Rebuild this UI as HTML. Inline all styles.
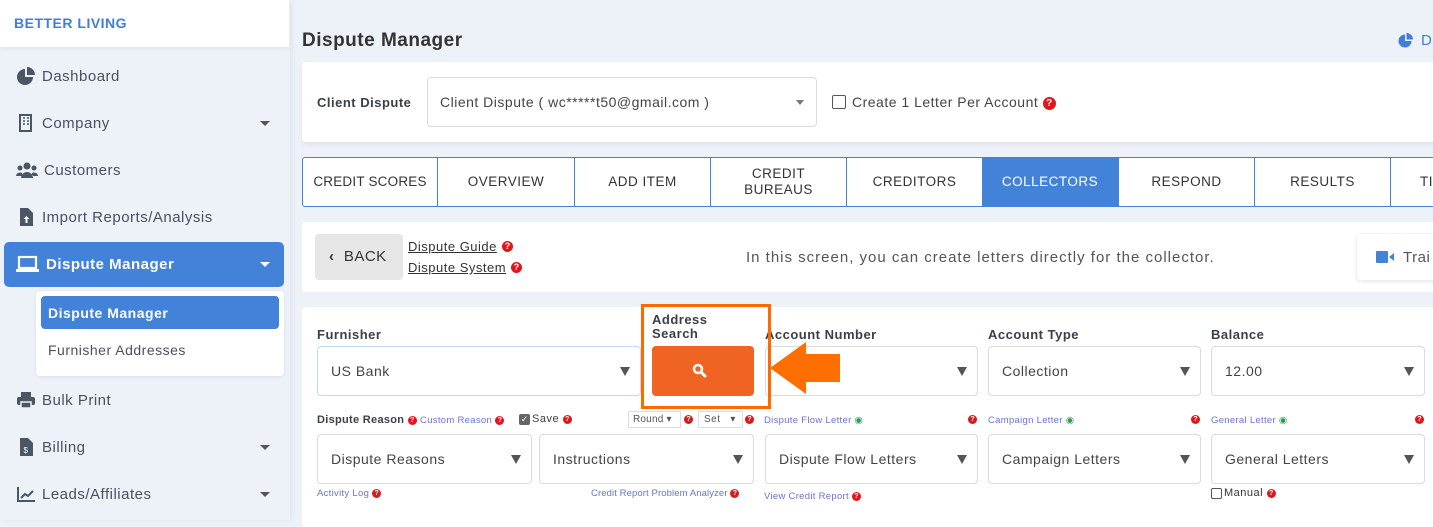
<!DOCTYPE html>
<html><head><meta charset="utf-8"><style>
*{box-sizing:border-box;margin:0;padding:0}
body{width:1433px;height:520px;overflow:hidden;background:#edf1f8;font-family:"Liberation Sans",sans-serif;color:#3a3f4a;position:relative;letter-spacing:0.5px}
.a{position:absolute}
.side{left:0;top:0;width:290px;height:520px;background:#edf1f8;box-shadow:2px 0 6px rgba(0,0,0,.05)}
.logo{left:0;top:0;width:289px;height:47px;background:#fff;box-shadow:0 2px 4px rgba(0,0,0,.05)}
.mi{left:16px;font-size:15px;color:#4b5060;display:flex;align-items:center;height:20px}
.mi svg{margin-right:6px}
.caret{width:0;height:0;border-left:5px solid transparent;border-right:5px solid transparent;border-top:5px solid #555}
.card{background:#fff;border-radius:4px}
.sel{background:#fff;border:1px solid #dcdcdc;border-radius:4px;font-size:14px;color:#444;display:flex;align-items:center;padding-left:13px}
.tri{position:absolute;right:10px;top:50%;margin-top:-4px;width:0;height:0;border-left:5px solid transparent;border-right:5px solid transparent;border-top:9px solid #555}
.lbl{font-size:13px;font-weight:bold;color:#3a3f4a}
.q{display:inline-block;width:11px;height:11px;border-radius:50%;background:#e0161c;color:#fff;font-size:9px;font-weight:bold;text-align:center;line-height:11px;vertical-align:middle;letter-spacing:0}
.sm{font-size:9.5px;color:#6a72d6;letter-spacing:0.3px}
.tab{top:157px;height:50px;border:1px solid #4282d8;border-left:none;font-size:13.5px;color:#333;display:flex;align-items:center;justify-content:center;text-align:center;line-height:16px;background:#fff}
</style></head><body>
<div class="a side"></div>
<div class="a logo"><div class="a" style="left:14px;top:15px;font-size:14px;font-weight:bold;color:#3f7fd9">BETTER LIVING</div></div>

<div class="a mi" style="top:66px"><svg width="20" height="18" viewBox="0 0 20 18"><path d="M9 2A8 8 0 1 0 17 10H9Z" fill="#4b5563"/><path d="M11 0A8 8 0 0 1 19 8H11Z" fill="#4b5563"/></svg>Dashboard</div>
<div class="a mi" style="top:113px"><svg width="20" height="18" viewBox="0 0 20 18"><rect x="4" y="1" width="11" height="16" fill="none" stroke="#4b5563" stroke-width="2"/><path d="M7 4h2M11 4h2M7 7h2M11 7h2M7 10h2M11 10h2" stroke="#4b5563" stroke-width="1.5"/></svg>Company</div>
<div class="a caret" style="left:260px;top:121px"></div>
<div class="a mi" style="top:160px"><svg width="22" height="18" viewBox="0 0 22 18"><circle cx="11" cy="5" r="3.5" fill="#4b5563"/><circle cx="4" cy="7" r="2.5" fill="#4b5563"/><circle cx="18" cy="7" r="2.5" fill="#4b5563"/><path d="M5 17a6 6 0 0 1 12 0Z M0 15a4 4 0 0 1 6-3v3Z M22 15a4 4 0 0 0-6-3v3Z" fill="#4b5563"/></svg>Customers</div>
<div class="a mi" style="top:207px"><svg width="20" height="20" viewBox="0 0 20 20"><path d="M4 1h8l5 5v13H4Z" fill="#4b5563"/><path d="M10.5 9l-3 3h2v4h2v-4h2Z" fill="#fff"/></svg>Import Reports/Analysis</div>
<div class="a" style="left:4px;top:242px;width:280px;height:45px;background:#4282d8;border-radius:5px"></div>
<div class="a mi" style="top:254px;color:#fff;font-size:15px;font-weight:600"><svg width="24" height="18" viewBox="0 0 24 18"><rect x="3" y="2" width="17" height="11" fill="none" stroke="#fff" stroke-width="2.2"/><rect x="0" y="14" width="23" height="3" fill="#fff"/></svg>Dispute Manager</div>
<div class="a caret" style="left:260px;top:262px;border-top-color:#fff"></div>
<div class="a" style="left:36px;top:291px;width:248px;height:85px;background:#fff;border-radius:4px;box-shadow:0 1px 4px rgba(0,0,0,.08)"></div>
<div class="a" style="left:41px;top:296px;width:238px;height:33px;background:#4282d8;border-radius:4px;color:#fff;font-size:14px;padding:9px 7px;font-weight:600">Dispute Manager</div>
<div class="a" style="left:48px;top:342px;font-size:14px;color:#4b5060">Furnisher Addresses</div>
<div class="a mi" style="top:390px"><svg width="20" height="18" viewBox="0 0 20 18"><rect x="5" y="1" width="10" height="5" fill="#4b5563"/><rect x="1" y="6" width="18" height="8" rx="2" fill="#4b5563"/><rect x="5" y="11" width="10" height="6" fill="#4b5563" stroke="#edf1f8" stroke-width="1.5"/></svg>Bulk Print</div>
<div class="a mi" style="top:437px"><svg width="20" height="20" viewBox="0 0 20 20"><path d="M4 1h8l5 5v13H4Z" fill="#4b5563"/><text x="7.5" y="16" font-size="8" fill="#fff" font-family="Liberation Sans">$</text></svg>Billing</div>
<div class="a caret" style="left:260px;top:445px"></div>
<div class="a mi" style="top:484px"><svg width="20" height="18" viewBox="0 0 20 18"><path d="M2 2v14h17" fill="none" stroke="#4b5563" stroke-width="2"/><path d="M5 13l4-4 3 2 5-5" fill="none" stroke="#4b5563" stroke-width="2"/></svg>Leads/Affiliates</div>
<div class="a caret" style="left:260px;top:492px"></div>

<div class="a" style="left:302px;top:30px;font-size:19px;font-weight:600;color:#333">Dispute Manager</div>
<svg class="a" style="left:1398px;top:33px" width="16" height="16" viewBox="0 0 16 16"><path d="M7 1.5A6.5 6.5 0 1 0 13.5 8H7Z" fill="#3f7fd9"/><path d="M8.5 0A6.5 6.5 0 0 1 15 6.5H8.5Z" fill="#3f7fd9"/></svg>
<div class="a" style="left:1421px;top:32px;font-size:15px;color:#3f7fd9">D</div>

<div class="a card" style="left:302px;top:62px;width:1140px;height:80px;box-shadow:0 3px 5px rgba(0,0,0,.05)"></div>
<div class="a lbl" style="left:317px;top:95px">Client Dispute</div>
<div class="a sel" style="left:427px;top:77px;width:390px;height:50px;padding-left:12px">Client Dispute ( wc*****t50@gmail.com )<span class="a" style="right:12px;top:22px;border-left:4px solid transparent;border-right:4px solid transparent;border-top:5px solid #777"></span></div>
<div class="a" style="left:832px;top:95px;width:14px;height:14px;border:1px solid #555;border-radius:2px"></div>
<div class="a" style="left:852px;top:94px;font-size:14px;color:#444">Create 1 Letter Per Account <span class="q" style="width:13px;height:13px;line-height:13px;font-size:10px">?</span></div>

<div class="a tab" style="left:302px;width:136px;border-left:1px solid #4282d8;border-radius:3px 0 0 3px;letter-spacing:0.2px">CREDIT SCORES</div>
<div class="a tab" style="left:438px;width:137px">OVERVIEW</div>
<div class="a tab" style="left:575px;width:136px">ADD ITEM</div>
<div class="a tab" style="left:711px;width:136px">CREDIT<br>BUREAUS</div>
<div class="a tab" style="left:847px;width:136px">CREDITORS</div>
<div class="a tab" style="left:982px;width:137px;background:#4282d8;color:#fff">COLLECTORS</div>
<div class="a tab" style="left:1119px;width:136px">RESPOND</div>
<div class="a tab" style="left:1255px;width:136px">RESULTS</div>
<div class="a tab" style="left:1391px;width:100px;justify-content:flex-start;padding-left:29px">TI</div>

<div class="a card" style="left:302px;top:222px;width:1140px;height:70px"></div>
<div class="a" style="left:315px;top:234px;width:88px;height:46px;background:#e6e6e6;border-radius:4px;font-size:15px;color:#333;padding:14px 0 0 14px"><span style="font-weight:bold">‹</span>&nbsp; BACK</div>
<div class="a" style="left:408px;top:239px;font-size:13px;color:#333;text-decoration:underline">Dispute Guide</div><span class="a q" style="left:502px;top:241px">?</span>
<div class="a" style="left:408px;top:260px;font-size:13px;color:#333;text-decoration:underline">Dispute System</div><span class="a q" style="left:511px;top:262px">?</span>
<div class="a" style="left:746px;top:249px;font-size:15px;color:#555;letter-spacing:1px">In this screen, you can create letters directly for the collector.</div>
<div class="a" style="left:1357px;top:234px;width:90px;height:46px;background:#fff;border-radius:4px;box-shadow:0 1px 5px rgba(0,0,0,.12)"></div>
<svg class="a" style="left:1376px;top:251px" width="18" height="12" viewBox="0 0 18 12"><rect x="0" y="0" width="12" height="12" rx="1" fill="#4282d8"/><path d="M13 6l5-4v8Z" fill="#4282d8"/></svg>
<div class="a" style="left:1403px;top:249px;font-size:15px;color:#555">Trai</div>

<div class="a card" style="left:302px;top:307px;width:1140px;height:220px"></div>
<div class="a lbl" style="left:317px;top:327px">Furnisher</div>
<div class="a lbl" style="left:765px;top:327px">Account Number</div>
<div class="a lbl" style="left:988px;top:327px">Account Type</div>
<div class="a lbl" style="left:1211px;top:327px">Balance</div>
<div class="a sel" style="left:317px;top:346px;width:324px;height:50px;border-color:#c5d8f5">US Bank<span class="tri"></span></div>
<div class="a sel" style="left:765px;top:346px;width:213px;height:50px"><span class="tri"></span></div>
<div class="a sel" style="left:988px;top:346px;width:213px;height:50px">Collection<span class="tri"></span></div>
<div class="a sel" style="left:1211px;top:346px;width:214px;height:50px">12.00<span class="tri"></span></div>
<div class="a" style="left:641px;top:304px;width:130px;height:105px;border:3px solid #ff6a00"></div>
<div class="a lbl" style="left:652px;top:313px;line-height:14px">Address<br>Search</div>
<div class="a" style="left:652px;top:346px;width:102px;height:50px;background:#f06423;border-radius:4px"></div>
<svg class="a" style="left:692px;top:363px" width="15" height="15" viewBox="0 0 15 15"><circle cx="6" cy="6" r="4" fill="none" stroke="#fff" stroke-width="2.5"/><path d="M9 9l4 4" stroke="#fff" stroke-width="3" stroke-linecap="round"/></svg>
<svg class="a" style="left:770px;top:342px" width="72" height="52" viewBox="0 0 72 52"><path d="M0 26L36 0V12H70V40H36V52Z" fill="#ff6f00"/></svg>

<div class="a" style="left:317px;top:414px;font-size:11px;font-weight:bold;color:#3a3f4a;letter-spacing:0.3px">Dispute Reason <span class="q" style="width:9px;height:9px;line-height:9px;font-size:7px">?</span> <span class="sm" style="font-weight:normal">Custom Reason</span> <span class="q" style="width:9px;height:9px;line-height:9px;font-size:7px">?</span></div>
<div class="a" style="left:519px;top:414px;width:11px;height:11px;background:#666;border-radius:2px;color:#fff;font-size:9px;text-align:center;line-height:11px;letter-spacing:0">✓</div>
<div class="a" style="left:532px;top:413px;font-size:11px;color:#3a3f4a">Save <span class="q" style="width:9px;height:9px;line-height:9px;font-size:7px">?</span></div>
<div class="a" style="left:628px;top:411px;width:53px;height:17px;border:1px solid #ddd;font-size:10px;color:#555;padding:2px 4px;letter-spacing:0.2px">Round ▾</div><span class="a q" style="left:684px;top:415px;width:9px;height:9px;line-height:9px;font-size:7px">?</span>
<div class="a" style="left:698px;top:411px;width:45px;height:17px;border:1px solid #ddd;font-size:10px;color:#555;padding:2px 5px">Set &nbsp;&nbsp;▾</div><span class="a q" style="left:745px;top:415px;width:9px;height:9px;line-height:9px;font-size:7px">?</span>
<div class="a sm" style="left:764px;top:415px">Dispute Flow Letter <span style="color:#2a9d56">◉</span></div><span class="a q" style="left:968px;top:415px;width:9px;height:9px;line-height:9px;font-size:7px">?</span>
<div class="a sm" style="left:988px;top:415px">Campaign Letter <span style="color:#2a9d56">◉</span></div><span class="a q" style="left:1191px;top:415px;width:9px;height:9px;line-height:9px;font-size:7px">?</span>
<div class="a sm" style="left:1211px;top:415px">General Letter <span style="color:#2a9d56">◉</span></div><span class="a q" style="left:1415px;top:415px;width:9px;height:9px;line-height:9px;font-size:7px">?</span>

<div class="a sel" style="left:317px;top:434px;width:215px;height:50px">Dispute Reasons<span class="tri"></span></div>
<div class="a sel" style="left:539px;top:434px;width:215px;height:50px">Instructions<span class="tri"></span></div>
<div class="a sel" style="left:765px;top:434px;width:213px;height:50px">Dispute Flow Letters<span class="tri"></span></div>
<div class="a sel" style="left:988px;top:434px;width:213px;height:50px">Campaign Letters<span class="tri"></span></div>
<div class="a sel" style="left:1211px;top:434px;width:214px;height:50px">General Letters<span class="tri"></span></div>

<div class="a sm" style="left:317px;top:488px">Activity Log <span class="q" style="width:9px;height:9px;line-height:9px;font-size:7px">?</span></div>
<div class="a sm" style="left:591px;top:488px;letter-spacing:0.1px">Credit Report Problem Analyzer <span class="q" style="width:9px;height:9px;line-height:9px;font-size:7px">?</span></div>
<div class="a sm" style="left:764px;top:491px">View Credit Report <span class="q" style="width:9px;height:9px;line-height:9px;font-size:7px">?</span></div>
<div class="a" style="left:1211px;top:488px;width:11px;height:11px;border:1px solid #555;border-radius:2px"></div>
<div class="a" style="left:1224px;top:487px;font-size:11px;color:#333">Manual <span class="q" style="width:9px;height:9px;line-height:9px;font-size:7px">?</span></div>
</body></html>
